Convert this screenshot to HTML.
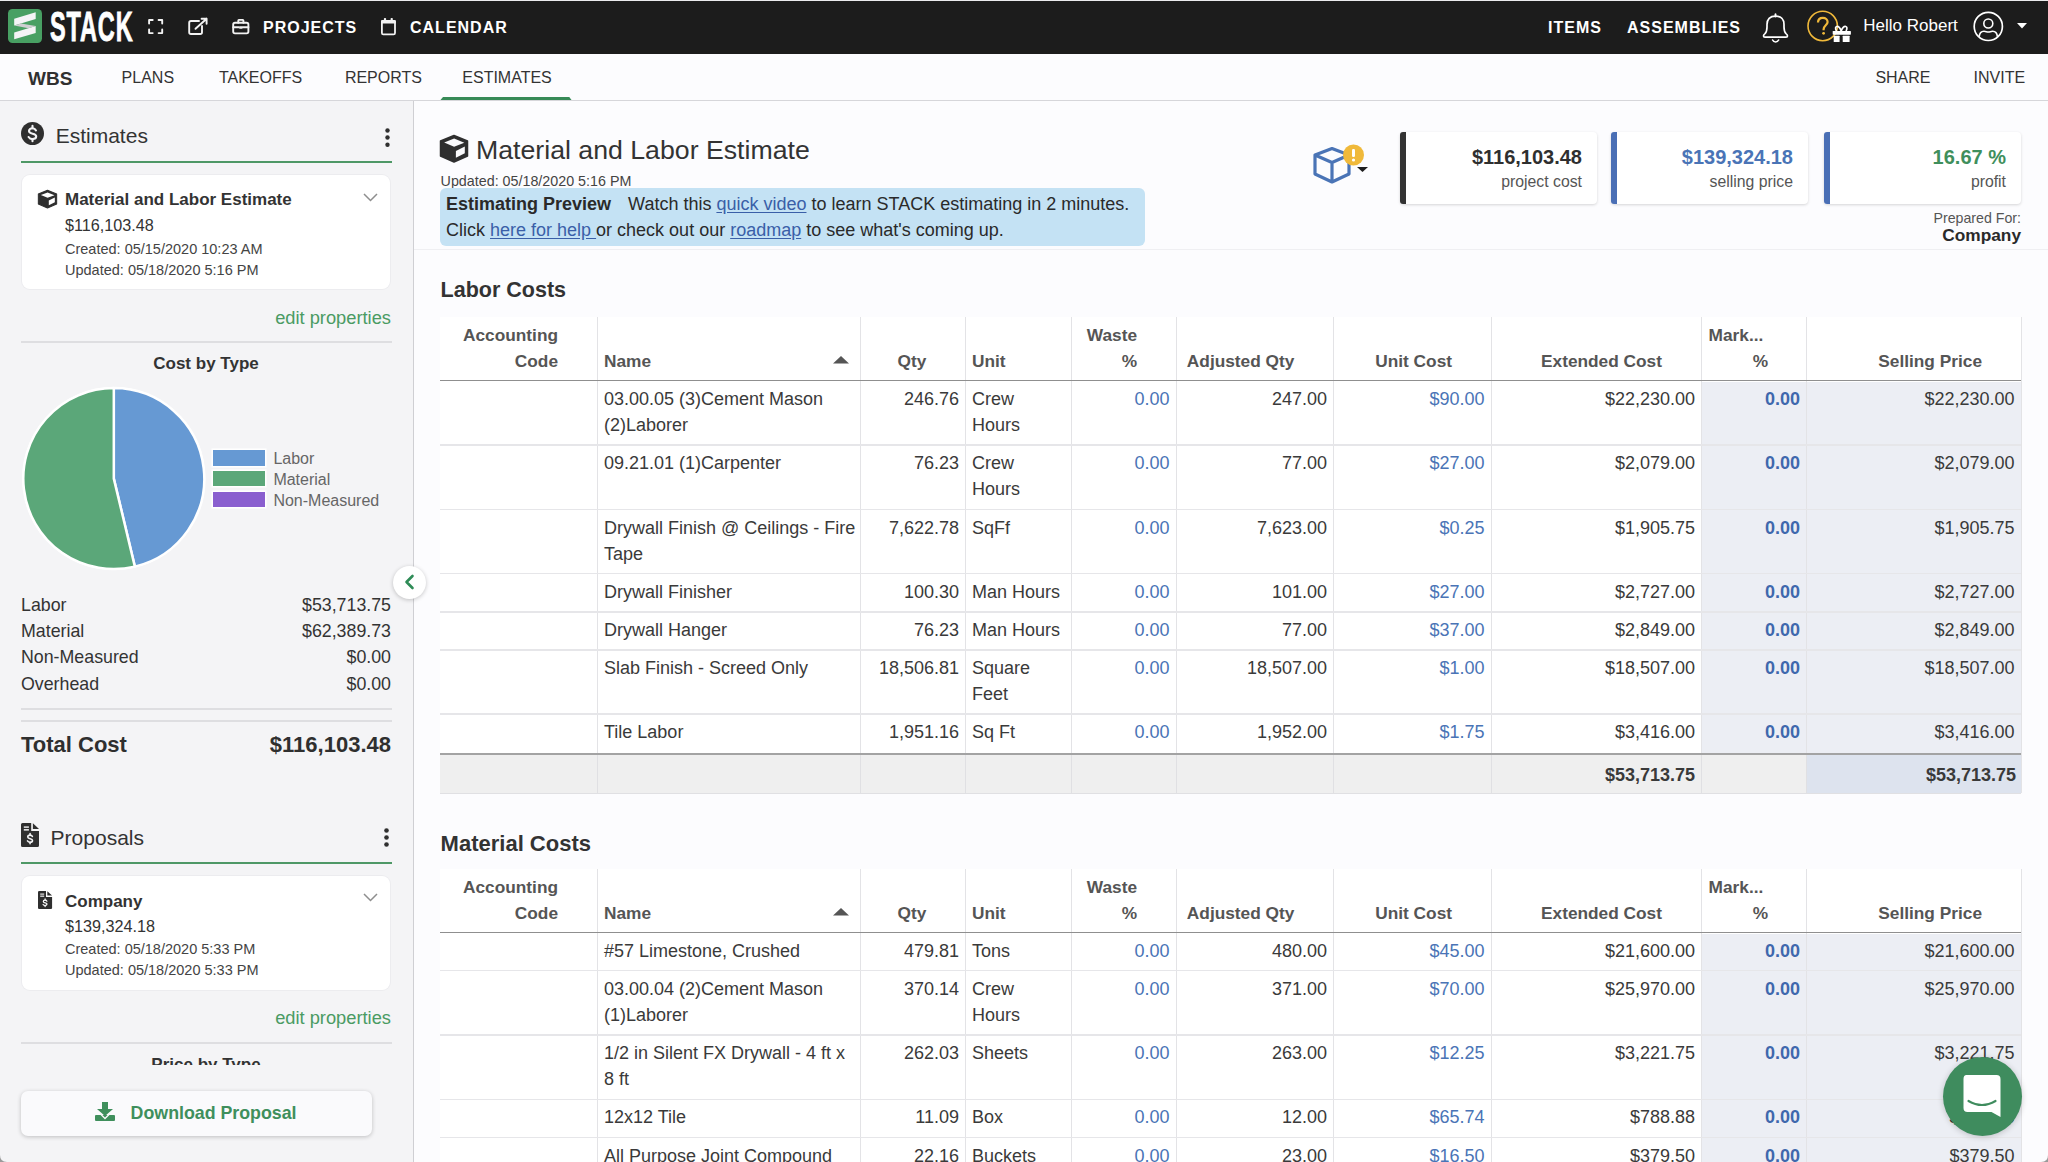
<!DOCTYPE html><html><head><meta charset="utf-8"><style>
html,body{margin:0;padding:0;width:2048px;height:1162px;overflow:hidden;background:#fcfcfe}
body{position:relative;font-family:"Liberation Sans",sans-serif}
.t{position:absolute;white-space:nowrap;line-height:1}
svg text{font-family:"Liberation Sans",sans-serif}
</style></head><body>
<div style="position:absolute;left:0px;top:0px;width:2048px;height:1162px;background:#fcfcfe"></div>
<div style="position:absolute;left:0px;top:0px;width:2048px;height:54px;background:#1c1c1c"></div>
<div style="position:absolute;left:0px;top:0px;width:2048px;height:1.4px;background:#ebebed"></div>
<div style="position:absolute;left:0px;top:54px;width:2048px;height:46px;background:#fcfcfe"></div>
<div style="position:absolute;left:0px;top:99.6px;width:2048px;height:1.5px;background:#d6d6da"></div>
<svg style="position:absolute;left:0px;top:0px;width:600px;height:110px;overflow:visible" viewBox="0 0 600 110"><path d="M440.5 99.9 L443 97.1 H569.3 L571.5 99.9 Z" fill="#378a57"/></svg>
<div style="position:absolute;left:0px;top:101px;width:413px;height:1061px;background:#f4f4f6"></div>
<div style="position:absolute;left:413px;top:101px;width:1.2px;height:1061px;background:#cfcfd3"></div>
<svg style="position:absolute;left:8.2px;top:8.8px;width:34px;height:34px;overflow:visible" viewBox="0 0 34 34"><rect x="0" y="0" width="34" height="34" rx="4.5" fill="#48a063"/>
<path d="M6.2 9.7 L27.7 3.3 L27.7 10.1 L6.2 16.6 Z" fill="#f4f4f6"/><path d="M6.2 23.5 L27.7 17.0 L27.7 23.9 L6.2 30.2 Z" fill="#f4f4f6"/>
<path d="M6.2 16.6 L13 14.6 L27.7 17.0 L20.5 19.2 Z" fill="#cfcfd2"/></svg>
<div class="t" style="top:5.65px;font-size:42px;font-weight:700;color:#ffffff;left:49.50px;transform:scaleX(0.56);transform-origin:0 0;letter-spacing:1.5px;-webkit-text-stroke:0.9px #fff;">STACK</div>
<svg style="position:absolute;left:0px;top:0px;width:300px;height:54px;overflow:visible" viewBox="0 0 300 54"><g fill="none" stroke="#f2f2f2" stroke-width="1.9" stroke-linecap="round" stroke-linejoin="round">
<path d="M149.1 23.6V20H152.7 M158.6 20H162.2V23.6 M162.2 29.5V33.1H158.6 M152.7 33.1H149.1V29.5"/>
<path d="M199 21H191Q189.2 21 189.2 22.8V32.2Q189.2 34 191 34H200.2Q202 34 202 32.2V26"/>
<path d="M195.5 28.8L206.6 18.7 M201.6 18.7H206.6V23.7"/>
<rect x="233.2" y="22.8" width="15.2" height="10.6" rx="1.8"/>
<path d="M238.3 22.8V20.5Q238.3 19.9 238.9 19.9H242.8Q243.4 19.9 243.4 20.5V22.8"/>
<path d="M233.2 27.2H238.8 M242.8 27.2H248.4"/>
</g><rect x="239.2" y="26.2" width="3.3" height="2.6" rx="0.6" fill="#f2f2f2"/></svg>
<div class="t" style="top:19.76px;font-size:16px;font-weight:700;color:#fff;letter-spacing:1.0px;left:263.00px;">PROJECTS</div>
<svg style="position:absolute;left:0px;top:0px;width:420px;height:54px;overflow:visible" viewBox="0 0 420 54"><rect x="381.9" y="20.9" width="13.1" height="13.4" rx="1.4" fill="none" stroke="#f2f2f2" stroke-width="1.8"/><rect x="381" y="20" width="14.9" height="3.6" rx="1.2" fill="#f2f2f2"/><rect x="383.9" y="17.9" width="2.2" height="3" rx="0.8" fill="#f2f2f2"/><rect x="390.6" y="17.9" width="2.2" height="3" rx="0.8" fill="#f2f2f2"/></svg>
<div class="t" style="top:19.76px;font-size:16px;font-weight:700;color:#fff;letter-spacing:1.0px;left:410.00px;">CALENDAR</div>
<div class="t" style="top:19.86px;font-size:16px;font-weight:700;color:#fff;letter-spacing:1.0px;left:1548.00px;">ITEMS</div>
<div class="t" style="top:19.86px;font-size:16px;font-weight:700;color:#fff;letter-spacing:1.0px;left:1627.00px;">ASSEMBLIES</div>
<svg style="position:absolute;left:1762px;top:14px;width:28px;height:30px;overflow:visible" viewBox="0 0 28 30"><path d="M1.5 22 Q1.5 20.6 3 19.6 Q5 17.6 5 13 L5 10.5 Q5 2.2 13.5 2.2 Q22 2.2 22 10.5 L22 13 Q22 17.6 24 19.6 Q25.5 20.6 25.5 22 Q25.5 23.2 24 23.2 L3 23.2 Q1.5 23.2 1.5 22 Z" fill="none" stroke="#fff" stroke-width="1.7" stroke-linejoin="round"/><path d="M13.5 0.2 V2.5" stroke="#fff" stroke-width="1.8" stroke-linecap="round"/><path d="M10.6 26 A3.3 3.3 0 0 0 16.6 26" fill="none" stroke="#fff" stroke-width="1.6" stroke-linecap="round"/></svg>
<svg style="position:absolute;left:1806px;top:10px;width:48px;height:34px;overflow:visible" viewBox="0 0 48 34"><circle cx="16.7" cy="16" r="14.7" fill="none" stroke="#f0b93a" stroke-width="1.6"/><path d="M12 12.5 C12 9.2 14.2 7.8 16.8 7.8 C19.6 7.8 21.6 9.6 21.6 12 C21.6 15 17.6 15.6 17.6 19.2 V20.2" fill="none" stroke="#f0b93a" stroke-width="2.2"/><circle cx="17.6" cy="23.3" r="1.4" fill="#f0b93a"/>
<path d="M35.2 21 C32.5 14 27.5 16 30.5 21 M35.2 21 C38 14 43 16 40 21" fill="none" stroke="#fff" stroke-width="1.7"/><rect x="26.7" y="20.9" width="18.2" height="3.8" rx="0.6" fill="#fff"/><rect x="27.7" y="25.8" width="5.9" height="6.1" rx="0.5" fill="#fff"/><rect x="36.7" y="25.8" width="6.9" height="6.1" rx="0.5" fill="#fff"/></svg>
<div class="t" style="top:17.41px;font-size:17px;font-weight:400;color:#fff;left:1863.30px;">Hello Robert</div>
<svg style="position:absolute;left:1972px;top:10px;width:33px;height:33px;overflow:visible" viewBox="0 0 33 33"><circle cx="16.3" cy="16.4" r="14.1" fill="none" stroke="#fff" stroke-width="1.7"/><circle cx="16.3" cy="13.5" r="4.5" fill="none" stroke="#fff" stroke-width="1.6"/><path d="M7.2 26.8 C7.5 23 9.5 21.3 12 21.3 C14 21.3 14.5 22 16.3 22 C18.1 22 18.6 21.3 20.6 21.3 C23.1 21.3 25.1 23 25.4 26.8" fill="none" stroke="#fff" stroke-width="1.6"/></svg>
<svg style="position:absolute;left:2016.8px;top:23.4px;width:10px;height:5.5px;overflow:visible" viewBox="0 0 10 5.5"><path d="M0 0H10L5 5.5Z" fill="#fff"/></svg>
<div class="t" style="top:68.92px;font-size:19px;font-weight:700;color:#303030;left:28.00px;">WBS</div>
<div class="t" style="top:69.96px;font-size:16px;font-weight:400;color:#333;left:121.60px;">PLANS</div>
<div class="t" style="top:69.96px;font-size:16px;font-weight:400;color:#333;left:218.90px;">TAKEOFFS</div>
<div class="t" style="top:69.96px;font-size:16px;font-weight:400;color:#333;left:344.90px;">REPORTS</div>
<div class="t" style="top:69.96px;font-size:16px;font-weight:400;color:#333;left:462.30px;">ESTIMATES</div>
<div class="t" style="top:69.96px;font-size:16px;font-weight:400;color:#333;left:1875.40px;">SHARE</div>
<div class="t" style="top:69.96px;font-size:16px;font-weight:400;color:#333;left:1973.60px;">INVITE</div>
<svg style="position:absolute;left:21px;top:121.5px;width:23px;height:23px;overflow:visible" viewBox="0 0 23 23"><circle cx="11.5" cy="11.5" r="11.5" fill="#2f2f2f"/><path d="M15 8.4 C14.2 6.9 13 6.3 11.5 6.3 C9.4 6.3 8 7.4 8 9 C8 12.6 15.2 10.8 15.2 14.3 C15.2 16 13.8 17.1 11.5 17.1 C9.8 17.1 8.5 16.5 7.6 15" fill="none" stroke="#f4f4f6" stroke-width="2.1" stroke-linecap="round"/><path d="M11.5 3.9 V6.3 M11.5 17.1 V19.3" stroke="#f4f4f6" stroke-width="2.1" stroke-linecap="round"/></svg>
<div class="t" style="top:124.52px;font-size:21px;font-weight:400;color:#333;left:55.70px;">Estimates</div>
<svg style="position:absolute;left:383.7px;top:127.5px;width:7px;height:19px;overflow:visible" viewBox="0 0 7 19"><circle cx="3.5" cy="2.5" r="2.2" fill="#2f2f2f"/><circle cx="3.5" cy="9.5" r="2.2" fill="#2f2f2f"/><circle cx="3.5" cy="16.7" r="2.2" fill="#2f2f2f"/></svg>
<div style="position:absolute;left:21px;top:161.3px;width:371px;height:1.7px;background:#4e9866"></div>
<div style="position:absolute;left:22px;top:175px;width:368px;height:114px;background:#fff;border-radius:8px;box-shadow:0 0 0 1px #ececef"></div>
<svg style="position:absolute;left:38px;top:190px;width:19px;height:18px;overflow:visible" viewBox="0 0 19 18"><g transform="scale(0.6786,0.6667)"><path d="M14 0.5 L27.5 6 L27.5 21 L14 27 L0.5 21 L0.5 6 Z" fill="#2f2f2f" stroke="#2f2f2f" stroke-width="1.5" stroke-linejoin="round"/><path d="M4.2 7.5 L14.1 3.6 L24.3 7.8 L14.1 11.7 Z" fill="#fff"/><path d="M15.9 15.9 L24.8 11.4 L24.8 18.3 L15.9 22.8 Z" fill="#fff"/></g></svg>
<div class="t" style="top:190.91px;font-size:17px;font-weight:700;color:#333;left:65.00px;">Material and Labor Estimate</div>
<svg style="position:absolute;left:363px;top:193px;width:15px;height:9px;overflow:visible" viewBox="0 0 15 9"><path d="M1 1 L7.5 7.5 L14 1" fill="none" stroke="#8e8e8e" stroke-width="1.5"/></svg>
<div class="t" style="top:217.39px;font-size:16.2px;font-weight:400;color:#333;left:65.00px;">$116,103.48</div>
<div class="t" style="top:241.53px;font-size:14.5px;font-weight:400;color:#444;left:65.00px;">Created: 05/15/2020 10:23 AM</div>
<div class="t" style="top:262.63px;font-size:14.5px;font-weight:400;color:#444;left:65.00px;">Updated: 05/18/2020 5:16 PM</div>
<div class="t" style="top:308.51px;font-size:18.3px;font-weight:400;color:#4a9b63;right:1657.00px;">edit properties</div>
<div style="position:absolute;left:21px;top:341px;width:371px;height:2px;background:#dedee1"></div>
<div class="t" style="top:355.21px;font-size:17px;font-weight:700;color:#333;left:-394.00px;width:1200px;text-align:center;">Cost by Type</div>
<svg style="position:absolute;left:0px;top:0px;width:300px;height:700px;overflow:visible" viewBox="0 0 300 700"><circle cx="113.8" cy="478.6" r="91.5" fill="#fff"/>
<path d="M113.8 478.6 L113.8 388.1 A90.5 90.5 0 0 1 134.87 566.61 Z" fill="#6699d3" stroke="#fff" stroke-width="2.5" stroke-linejoin="round"/>
<path d="M113.8 478.6 L134.87 566.61 A90.5 90.5 0 1 1 113.8 388.1 Z" fill="#5ba779" stroke="#fff" stroke-width="2.5" stroke-linejoin="round"/></svg>
<div style="position:absolute;left:213px;top:450px;width:52px;height:16px;background:#6699d3;box-shadow:0 0 0 1.5px #fff"></div>
<div style="position:absolute;left:213px;top:471px;width:52px;height:15px;background:#5ba779;box-shadow:0 0 0 1.5px #fff"></div>
<div style="position:absolute;left:213px;top:492px;width:52px;height:15px;background:#8a5fcf;box-shadow:0 0 0 1.5px #fff"></div>
<div class="t" style="top:450.66px;font-size:16px;font-weight:400;color:#666;left:273.40px;">Labor</div>
<div class="t" style="top:471.86px;font-size:16px;font-weight:400;color:#666;left:273.40px;">Material</div>
<div class="t" style="top:493.06px;font-size:16px;font-weight:400;color:#666;left:273.40px;">Non-Measured</div>
<div class="t" style="top:596.73px;font-size:17.8px;font-weight:400;color:#333;left:21.00px;">Labor</div>
<div class="t" style="top:596.73px;font-size:17.8px;font-weight:400;color:#333;right:1657.00px;">$53,713.75</div>
<div class="t" style="top:623.03px;font-size:17.8px;font-weight:400;color:#333;left:21.00px;">Material</div>
<div class="t" style="top:623.03px;font-size:17.8px;font-weight:400;color:#333;right:1657.00px;">$62,389.73</div>
<div class="t" style="top:649.33px;font-size:17.8px;font-weight:400;color:#333;left:21.00px;">Non-Measured</div>
<div class="t" style="top:649.33px;font-size:17.8px;font-weight:400;color:#333;right:1657.00px;">$0.00</div>
<div class="t" style="top:675.63px;font-size:17.8px;font-weight:400;color:#333;left:21.00px;">Overhead</div>
<div class="t" style="top:675.63px;font-size:17.8px;font-weight:400;color:#333;right:1657.00px;">$0.00</div>
<div style="position:absolute;left:21px;top:708px;width:371px;height:2px;background:#dedee1"></div>
<div style="position:absolute;left:21px;top:720px;width:371px;height:2px;background:#dedee1"></div>
<div class="t" style="top:733.98px;font-size:22px;font-weight:700;color:#2f2f2f;left:21.00px;">Total Cost</div>
<div class="t" style="top:733.98px;font-size:22px;font-weight:700;color:#2f2f2f;right:1657.00px;">$116,103.48</div>
<div style="position:absolute;left:393px;top:565.5px;width:33px;height:33px;background:#fff;border-radius:50%;box-shadow:0 1px 4px rgba(0,0,0,0.22)"></div>
<svg style="position:absolute;left:402.5px;top:573.5px;width:12px;height:16px;overflow:visible" viewBox="0 0 12 16"><path d="M9.5 2 L3.5 8 L9.5 14" fill="none" stroke="#2f8c57" stroke-width="2.6" stroke-linecap="round" stroke-linejoin="round"/></svg>
<svg style="position:absolute;left:21px;top:823px;width:18px;height:24px;overflow:visible" viewBox="0 0 18 24"><path d="M1.5 0 H10.2 V8 H18 V22.5 Q18 24 16.5 24 H1.5 Q0 24 0 22.5 V1.5 Q0 0 1.5 0 Z" fill="#2f2f2f"/><path d="M11.9 0.2 L18 5.9 H11.9 Z" fill="#2f2f2f"/><rect x="2.8" y="3.4" width="5.1" height="1.4" fill="#f4f4f6"/><rect x="2.8" y="6.1" width="5.1" height="1.5" fill="#f4f4f6"/><g transform="translate(9,15.6) scale(0.66) translate(-11.4,-11.6)"><path d="M15 8.4 C14.2 6.9 13 6.3 11.5 6.3 C9.4 6.3 8 7.4 8 9 C8 12.6 15.2 10.8 15.2 14.3 C15.2 16 13.8 17.1 11.5 17.1 C9.8 17.1 8.5 16.5 7.6 15" fill="none" stroke="#f4f4f6" stroke-width="2.4" stroke-linecap="round"/><path d="M11.5 3.9 V6.3 M11.5 17.1 V19.3" stroke="#f4f4f6" stroke-width="2.4" stroke-linecap="round"/></g></svg>
<div class="t" style="top:827.22px;font-size:21px;font-weight:400;color:#333;left:50.60px;">Proposals</div>
<svg style="position:absolute;left:383px;top:828px;width:7px;height:19px;overflow:visible" viewBox="0 0 7 19"><circle cx="3.5" cy="2.5" r="2.3" fill="#2f2f2f"/><circle cx="3.5" cy="9.5" r="2.3" fill="#2f2f2f"/><circle cx="3.5" cy="16.5" r="2.3" fill="#2f2f2f"/></svg>
<div style="position:absolute;left:21px;top:862.2px;width:371px;height:1.7px;background:#4e9866"></div>
<div style="position:absolute;left:22px;top:876px;width:368px;height:114px;background:#fff;border-radius:8px;box-shadow:0 0 0 1px #ececef"></div>
<svg style="position:absolute;left:37.8px;top:890.9px;width:14.1px;height:18.1px;overflow:visible" viewBox="0 0 14.1 18.1"><g transform="scale(0.7833,0.7542)"><path d="M1.5 0 H10.2 V8 H18 V22.5 Q18 24 16.5 24 H1.5 Q0 24 0 22.5 V1.5 Q0 0 1.5 0 Z" fill="#2f2f2f"/><path d="M11.9 0.2 L18 5.9 H11.9 Z" fill="#2f2f2f"/><rect x="2.8" y="3.4" width="5.1" height="1.4" fill="#fff"/><rect x="2.8" y="6.1" width="5.1" height="1.5" fill="#fff"/><g transform="translate(9,15.6) scale(0.66) translate(-11.4,-11.6)"><path d="M15 8.4 C14.2 6.9 13 6.3 11.5 6.3 C9.4 6.3 8 7.4 8 9 C8 12.6 15.2 10.8 15.2 14.3 C15.2 16 13.8 17.1 11.5 17.1 C9.8 17.1 8.5 16.5 7.6 15" fill="none" stroke="#fff" stroke-width="2.4" stroke-linecap="round"/><path d="M11.5 3.9 V6.3 M11.5 17.1 V19.3" stroke="#fff" stroke-width="2.4" stroke-linecap="round"/></g></g></svg>
<div class="t" style="top:892.51px;font-size:17px;font-weight:700;color:#333;left:65.00px;">Company</div>
<svg style="position:absolute;left:363px;top:893px;width:15px;height:9px;overflow:visible" viewBox="0 0 15 9"><path d="M1 1 L7.5 7.5 L14 1" fill="none" stroke="#8e8e8e" stroke-width="1.5"/></svg>
<div class="t" style="top:918.09px;font-size:16.2px;font-weight:400;color:#333;left:65.00px;">$139,324.18</div>
<div class="t" style="top:941.73px;font-size:14.5px;font-weight:400;color:#444;left:65.00px;">Created: 05/18/2020 5:33 PM</div>
<div class="t" style="top:962.73px;font-size:14.5px;font-weight:400;color:#444;left:65.00px;">Updated: 05/18/2020 5:33 PM</div>
<div class="t" style="top:1008.91px;font-size:18.3px;font-weight:400;color:#4a9b63;right:1657.00px;">edit properties</div>
<div style="position:absolute;left:21px;top:1042px;width:371px;height:2px;background:#dedee1"></div>
<div style="position:absolute;left:0;top:1050px;width:413px;height:15px;overflow:hidden">
<div class="t" style="top:6.21px;font-size:17px;font-weight:700;color:#333;left:-394.00px;width:1200px;text-align:center;">Price by Type</div>
</div>
<div style="position:absolute;left:21px;top:1091px;width:351px;height:45px;background:#fafafc;border-radius:7px;box-shadow:0 1px 4px rgba(0,0,0,0.22)"></div>
<svg style="position:absolute;left:95px;top:1102px;width:20px;height:19px;overflow:visible" viewBox="0 0 20 19"><path d="M7 0H13V7H18L10 14L2 7H7Z" fill="#3f8f5c"/><rect x="0" y="13" width="20" height="6" rx="1" fill="#3f8f5c"/><path d="M6 12.5L10 16.5L14 12.5" fill="none" stroke="#fafafc" stroke-width="1.3"/></svg>
<div class="t" style="top:1104.73px;font-size:17.8px;font-weight:700;color:#3f8f5c;left:130.60px;">Download Proposal</div>
<svg style="position:absolute;left:440px;top:135px;width:28px;height:28px;overflow:visible" viewBox="0 0 28 28"><path d="M14 0.5 L27.5 6 L27.5 21 L14 27 L0.5 21 L0.5 6 Z" fill="#2f2f2f" stroke="#2f2f2f" stroke-width="1.5" stroke-linejoin="round"/><path d="M4.2 7.5 L14.1 3.6 L24.3 7.8 L14.1 11.7 Z" fill="#fafafc"/><path d="M15.9 15.9 L24.8 11.4 L24.8 18.3 L15.9 22.8 Z" fill="#fafafc"/></svg>
<div class="t" style="top:136.90px;font-size:26.7px;font-weight:400;color:#333;left:476.00px;">Material and Labor Estimate</div>
<div class="t" style="top:173.80px;font-size:14.3px;font-weight:400;color:#444;left:440.60px;">Updated: 05/18/2020 5:16 PM</div>
<div style="position:absolute;left:440px;top:188px;width:705px;height:58px;background:#c4e2f4;border-radius:6px"></div>
<div class="t" style="top:195.26px;font-size:18px;font-weight:400;color:#2a2a2a;left:446.00px;"><b style="font-weight:700">Estimating Preview</b><span style="display:inline-block;width:17px"></span>Watch this <span style="color:#3a5fa8;text-decoration:underline;text-underline-offset:2px">quick video</span> to learn STACK estimating in 2 minutes.</div>
<div class="t" style="top:220.96px;font-size:18px;font-weight:400;color:#2a2a2a;left:446.00px;">Click <span style="color:#3a5fa8;text-decoration:underline;text-underline-offset:2px">here for help </span>or check out our <span style="color:#3a5fa8;text-decoration:underline;text-underline-offset:2px">roadmap</span> to see what's coming up.</div>
<div style="position:absolute;left:414px;top:248.5px;width:1634px;height:1.5px;background:#efeff2"></div>
<svg style="position:absolute;left:1312px;top:145px;width:58px;height:40px;overflow:visible" viewBox="0 0 58 40"><path d="M20 3.5 L37 10 L37 29 L20 37 L3 29 L3 10 Z M3 10 L20 17.5 L37 10 M20 17.5 V37" fill="none" stroke="#4a74b6" stroke-width="3.2" stroke-linejoin="round"/>
<circle cx="41.5" cy="10" r="10.5" fill="#f0b93a"/><rect x="40" y="4" width="3" height="8" rx="1.2" fill="#fff"/><circle cx="41.5" cy="15" r="1.6" fill="#fff"/>
<path d="M45 22H56L50.5 27Z" fill="#1e1e1e"/></svg>
<div style="position:absolute;left:1400px;top:131.5px;width:197px;height:72.5px;background:#fff;border-radius:4px;box-shadow:0 1px 3px rgba(0,0,0,0.16)"></div>
<div style="position:absolute;left:1400px;top:131.5px;width:6px;height:72.5px;background:#333333;border-radius:3px 0 0 3px"></div>
<div class="t" style="top:146.77px;font-size:20px;font-weight:700;color:#2f2f2f;right:466.00px;">$116,103.48</div>
<div class="t" style="top:173.63px;font-size:15.8px;font-weight:400;color:#555;right:466.00px;">project cost</div>
<div style="position:absolute;left:1611px;top:131.5px;width:197px;height:72.5px;background:#fff;border-radius:4px;box-shadow:0 1px 3px rgba(0,0,0,0.16)"></div>
<div style="position:absolute;left:1611px;top:131.5px;width:6px;height:72.5px;background:#4a6fb5;border-radius:3px 0 0 3px"></div>
<div class="t" style="top:146.77px;font-size:20px;font-weight:700;color:#4a74b6;right:255.00px;">$139,324.18</div>
<div class="t" style="top:173.63px;font-size:15.8px;font-weight:400;color:#555;right:255.00px;">selling price</div>
<div style="position:absolute;left:1824px;top:131.5px;width:197px;height:72.5px;background:#fff;border-radius:4px;box-shadow:0 1px 3px rgba(0,0,0,0.16)"></div>
<div style="position:absolute;left:1824px;top:131.5px;width:6px;height:72.5px;background:#4a6fb5;border-radius:3px 0 0 3px"></div>
<div class="t" style="top:146.77px;font-size:20px;font-weight:700;color:#3f8f5c;right:42.00px;">16.67 %</div>
<div class="t" style="top:173.63px;font-size:15.8px;font-weight:400;color:#555;right:42.00px;">profit</div>
<div class="t" style="top:210.88px;font-size:14.2px;font-weight:400;color:#555;right:27.00px;">Prepared For:</div>
<div class="t" style="top:226.76px;font-size:17.3px;font-weight:700;color:#2a2a2a;right:27.00px;">Company</div>
<div class="t" style="top:280.40px;font-size:21.5px;font-weight:700;color:#333;left:440.60px;">Labor Costs</div>
<div class="t" style="top:832.88px;font-size:22px;font-weight:700;color:#333;left:440.60px;">Material Costs</div>
<div style="position:absolute;left:440px;top:317px;width:1581px;height:476.29999999999995px;background:#fff"></div>
<div style="position:absolute;left:1701px;top:382.0px;width:320px;height:411.29999999999995px;background:#eceef4"></div>
<div class="t" style="top:326.86px;font-size:17.3px;font-weight:700;color:#555;right:1490.00px;">Accounting</div>
<div class="t" style="top:352.66px;font-size:17.3px;font-weight:700;color:#555;right:1490.00px;">Code</div>
<div class="t" style="top:352.66px;font-size:17.3px;font-weight:700;color:#555;left:604.00px;">Name</div>
<svg style="position:absolute;left:833px;top:355.5px;width:16px;height:8px;overflow:visible" viewBox="0 0 16 8"><path d="M0 7.5H16L8 0Z" fill="#555"/></svg>
<div class="t" style="top:352.66px;font-size:17.3px;font-weight:700;color:#555;right:1121.60px;">Qty</div>
<div class="t" style="top:352.66px;font-size:17.3px;font-weight:700;color:#555;left:972.00px;">Unit</div>
<div class="t" style="top:326.86px;font-size:17.3px;font-weight:700;color:#555;right:911.00px;">Waste</div>
<div class="t" style="top:352.66px;font-size:17.3px;font-weight:700;color:#555;right:911.00px;">%</div>
<div class="t" style="top:352.66px;font-size:17.3px;font-weight:700;color:#555;right:753.60px;">Adjusted Qty</div>
<div class="t" style="top:352.66px;font-size:17.3px;font-weight:700;color:#555;right:596.00px;">Unit Cost</div>
<div class="t" style="top:352.66px;font-size:17.3px;font-weight:700;color:#555;right:386.00px;">Extended Cost</div>
<div class="t" style="top:326.86px;font-size:17.3px;font-weight:700;color:#555;left:1708.60px;">Mark...</div>
<div class="t" style="top:352.66px;font-size:17.3px;font-weight:700;color:#555;right:280.00px;">%</div>
<div class="t" style="top:352.66px;font-size:17.3px;font-weight:700;color:#555;right:66.00px;">Selling Price</div>
<div style="position:absolute;left:597px;top:317px;width:1px;height:476.29999999999995px;background:#e3e3e6"></div>
<div style="position:absolute;left:860px;top:317px;width:1px;height:476.29999999999995px;background:#e3e3e6"></div>
<div style="position:absolute;left:965px;top:317px;width:1px;height:476.29999999999995px;background:#e3e3e6"></div>
<div style="position:absolute;left:1071px;top:317px;width:1px;height:476.29999999999995px;background:#e3e3e6"></div>
<div style="position:absolute;left:1176px;top:317px;width:1px;height:476.29999999999995px;background:#e3e3e6"></div>
<div style="position:absolute;left:1333px;top:317px;width:1px;height:476.29999999999995px;background:#e3e3e6"></div>
<div style="position:absolute;left:1491px;top:317px;width:1px;height:476.29999999999995px;background:#e3e3e6"></div>
<div style="position:absolute;left:1701px;top:317px;width:1px;height:476.29999999999995px;background:#e3e3e6"></div>
<div style="position:absolute;left:1806px;top:317px;width:1px;height:476.29999999999995px;background:#e3e3e6"></div>
<div style="position:absolute;left:2021px;top:317px;width:1px;height:476.29999999999995px;background:#e3e3e6"></div>
<div style="position:absolute;left:440px;top:379.6px;width:1581px;height:1.8px;background:#8f8f8f"></div>
<div class="t" style="top:389.66px;font-size:18px;font-weight:400;color:#3a3a3a;left:604.00px;">03.00.05 (3)Cement Mason</div>
<div class="t" style="top:415.66px;font-size:18px;font-weight:400;color:#3a3a3a;left:604.00px;">(2)Laborer</div>
<div class="t" style="top:389.66px;font-size:18px;font-weight:400;color:#3a3a3a;right:1089.00px;">246.76</div>
<div class="t" style="top:389.66px;font-size:18px;font-weight:400;color:#3a3a3a;left:972.00px;">Crew</div>
<div class="t" style="top:415.66px;font-size:18px;font-weight:400;color:#3a3a3a;left:972.00px;">Hours</div>
<div class="t" style="top:389.66px;font-size:18px;font-weight:400;color:#4a74b6;right:878.50px;">0.00</div>
<div class="t" style="top:389.66px;font-size:18px;font-weight:400;color:#3a3a3a;right:721.00px;">247.00</div>
<div class="t" style="top:389.66px;font-size:18px;font-weight:400;color:#4a74b6;right:563.50px;">$90.00</div>
<div class="t" style="top:389.66px;font-size:18px;font-weight:400;color:#3a3a3a;right:353.00px;">$22,230.00</div>
<div class="t" style="top:389.66px;font-size:18px;font-weight:700;color:#3f68ad;right:248.00px;">0.00</div>
<div class="t" style="top:389.66px;font-size:18px;font-weight:400;color:#3a3a3a;right:33.50px;">$22,230.00</div>
<div style="position:absolute;left:440px;top:444.45px;width:1581px;height:1.5px;background:#e6e6e9"></div>
<div class="t" style="top:454.36px;font-size:18px;font-weight:400;color:#3a3a3a;left:604.00px;">09.21.01 (1)Carpenter</div>
<div class="t" style="top:454.36px;font-size:18px;font-weight:400;color:#3a3a3a;right:1089.00px;">76.23</div>
<div class="t" style="top:454.36px;font-size:18px;font-weight:400;color:#3a3a3a;left:972.00px;">Crew</div>
<div class="t" style="top:480.36px;font-size:18px;font-weight:400;color:#3a3a3a;left:972.00px;">Hours</div>
<div class="t" style="top:454.36px;font-size:18px;font-weight:400;color:#4a74b6;right:878.50px;">0.00</div>
<div class="t" style="top:454.36px;font-size:18px;font-weight:400;color:#3a3a3a;right:721.00px;">77.00</div>
<div class="t" style="top:454.36px;font-size:18px;font-weight:400;color:#4a74b6;right:563.50px;">$27.00</div>
<div class="t" style="top:454.36px;font-size:18px;font-weight:400;color:#3a3a3a;right:353.00px;">$2,079.00</div>
<div class="t" style="top:454.36px;font-size:18px;font-weight:700;color:#3f68ad;right:248.00px;">0.00</div>
<div class="t" style="top:454.36px;font-size:18px;font-weight:400;color:#3a3a3a;right:33.50px;">$2,079.00</div>
<div style="position:absolute;left:440px;top:508.75px;width:1581px;height:1.5px;background:#e6e6e9"></div>
<div class="t" style="top:518.66px;font-size:18px;font-weight:400;color:#3a3a3a;left:604.00px;">Drywall Finish @ Ceilings - Fire</div>
<div class="t" style="top:544.66px;font-size:18px;font-weight:400;color:#3a3a3a;left:604.00px;">Tape</div>
<div class="t" style="top:518.66px;font-size:18px;font-weight:400;color:#3a3a3a;right:1089.00px;">7,622.78</div>
<div class="t" style="top:518.66px;font-size:18px;font-weight:400;color:#3a3a3a;left:972.00px;">SqFf</div>
<div class="t" style="top:518.66px;font-size:18px;font-weight:400;color:#4a74b6;right:878.50px;">0.00</div>
<div class="t" style="top:518.66px;font-size:18px;font-weight:400;color:#3a3a3a;right:721.00px;">7,623.00</div>
<div class="t" style="top:518.66px;font-size:18px;font-weight:400;color:#4a74b6;right:563.50px;">$0.25</div>
<div class="t" style="top:518.66px;font-size:18px;font-weight:400;color:#3a3a3a;right:353.00px;">$1,905.75</div>
<div class="t" style="top:518.66px;font-size:18px;font-weight:700;color:#3f68ad;right:248.00px;">0.00</div>
<div class="t" style="top:518.66px;font-size:18px;font-weight:400;color:#3a3a3a;right:33.50px;">$1,905.75</div>
<div style="position:absolute;left:440px;top:572.85px;width:1581px;height:1.5px;background:#e6e6e9"></div>
<div class="t" style="top:582.76px;font-size:18px;font-weight:400;color:#3a3a3a;left:604.00px;">Drywall Finisher</div>
<div class="t" style="top:582.76px;font-size:18px;font-weight:400;color:#3a3a3a;right:1089.00px;">100.30</div>
<div class="t" style="top:582.76px;font-size:18px;font-weight:400;color:#3a3a3a;left:972.00px;">Man Hours</div>
<div class="t" style="top:582.76px;font-size:18px;font-weight:400;color:#4a74b6;right:878.50px;">0.00</div>
<div class="t" style="top:582.76px;font-size:18px;font-weight:400;color:#3a3a3a;right:721.00px;">101.00</div>
<div class="t" style="top:582.76px;font-size:18px;font-weight:400;color:#4a74b6;right:563.50px;">$27.00</div>
<div class="t" style="top:582.76px;font-size:18px;font-weight:400;color:#3a3a3a;right:353.00px;">$2,727.00</div>
<div class="t" style="top:582.76px;font-size:18px;font-weight:700;color:#3f68ad;right:248.00px;">0.00</div>
<div class="t" style="top:582.76px;font-size:18px;font-weight:400;color:#3a3a3a;right:33.50px;">$2,727.00</div>
<div style="position:absolute;left:440px;top:611.15px;width:1581px;height:1.5px;background:#e6e6e9"></div>
<div class="t" style="top:621.06px;font-size:18px;font-weight:400;color:#3a3a3a;left:604.00px;">Drywall Hanger</div>
<div class="t" style="top:621.06px;font-size:18px;font-weight:400;color:#3a3a3a;right:1089.00px;">76.23</div>
<div class="t" style="top:621.06px;font-size:18px;font-weight:400;color:#3a3a3a;left:972.00px;">Man Hours</div>
<div class="t" style="top:621.06px;font-size:18px;font-weight:400;color:#4a74b6;right:878.50px;">0.00</div>
<div class="t" style="top:621.06px;font-size:18px;font-weight:400;color:#3a3a3a;right:721.00px;">77.00</div>
<div class="t" style="top:621.06px;font-size:18px;font-weight:400;color:#4a74b6;right:563.50px;">$37.00</div>
<div class="t" style="top:621.06px;font-size:18px;font-weight:400;color:#3a3a3a;right:353.00px;">$2,849.00</div>
<div class="t" style="top:621.06px;font-size:18px;font-weight:700;color:#3f68ad;right:248.00px;">0.00</div>
<div class="t" style="top:621.06px;font-size:18px;font-weight:400;color:#3a3a3a;right:33.50px;">$2,849.00</div>
<div style="position:absolute;left:440px;top:649.15px;width:1581px;height:1.5px;background:#e6e6e9"></div>
<div class="t" style="top:659.06px;font-size:18px;font-weight:400;color:#3a3a3a;left:604.00px;">Slab Finish - Screed Only</div>
<div class="t" style="top:659.06px;font-size:18px;font-weight:400;color:#3a3a3a;right:1089.00px;">18,506.81</div>
<div class="t" style="top:659.06px;font-size:18px;font-weight:400;color:#3a3a3a;left:972.00px;">Square</div>
<div class="t" style="top:685.06px;font-size:18px;font-weight:400;color:#3a3a3a;left:972.00px;">Feet</div>
<div class="t" style="top:659.06px;font-size:18px;font-weight:400;color:#4a74b6;right:878.50px;">0.00</div>
<div class="t" style="top:659.06px;font-size:18px;font-weight:400;color:#3a3a3a;right:721.00px;">18,507.00</div>
<div class="t" style="top:659.06px;font-size:18px;font-weight:400;color:#4a74b6;right:563.50px;">$1.00</div>
<div class="t" style="top:659.06px;font-size:18px;font-weight:400;color:#3a3a3a;right:353.00px;">$18,507.00</div>
<div class="t" style="top:659.06px;font-size:18px;font-weight:700;color:#3f68ad;right:248.00px;">0.00</div>
<div class="t" style="top:659.06px;font-size:18px;font-weight:400;color:#3a3a3a;right:33.50px;">$18,507.00</div>
<div style="position:absolute;left:440px;top:713.35px;width:1581px;height:1.5px;background:#e6e6e9"></div>
<div class="t" style="top:723.26px;font-size:18px;font-weight:400;color:#3a3a3a;left:604.00px;">Tile Labor</div>
<div class="t" style="top:723.26px;font-size:18px;font-weight:400;color:#3a3a3a;right:1089.00px;">1,951.16</div>
<div class="t" style="top:723.26px;font-size:18px;font-weight:400;color:#3a3a3a;left:972.00px;">Sq Ft</div>
<div class="t" style="top:723.26px;font-size:18px;font-weight:400;color:#4a74b6;right:878.50px;">0.00</div>
<div class="t" style="top:723.26px;font-size:18px;font-weight:400;color:#3a3a3a;right:721.00px;">1,952.00</div>
<div class="t" style="top:723.26px;font-size:18px;font-weight:400;color:#4a74b6;right:563.50px;">$1.75</div>
<div class="t" style="top:723.26px;font-size:18px;font-weight:400;color:#3a3a3a;right:353.00px;">$3,416.00</div>
<div class="t" style="top:723.26px;font-size:18px;font-weight:700;color:#3f68ad;right:248.00px;">0.00</div>
<div class="t" style="top:723.26px;font-size:18px;font-weight:400;color:#3a3a3a;right:33.50px;">$3,416.00</div>
<div style="position:absolute;left:440px;top:752.55px;width:1581px;height:1.5px;background:#e6e6e9"></div>
<div style="position:absolute;left:440px;top:754.3px;width:1366px;height:39px;background:#efefef"></div>
<div style="position:absolute;left:1806px;top:754.3px;width:215px;height:39px;background:#dde3ee"></div>
<div style="position:absolute;left:597px;top:754.3px;width:1px;height:39px;background:#e0e0e3"></div>
<div style="position:absolute;left:860px;top:754.3px;width:1px;height:39px;background:#e0e0e3"></div>
<div style="position:absolute;left:965px;top:754.3px;width:1px;height:39px;background:#e0e0e3"></div>
<div style="position:absolute;left:1071px;top:754.3px;width:1px;height:39px;background:#e0e0e3"></div>
<div style="position:absolute;left:1176px;top:754.3px;width:1px;height:39px;background:#e0e0e3"></div>
<div style="position:absolute;left:1333px;top:754.3px;width:1px;height:39px;background:#e0e0e3"></div>
<div style="position:absolute;left:1491px;top:754.3px;width:1px;height:39px;background:#e0e0e3"></div>
<div style="position:absolute;left:1701px;top:754.3px;width:1px;height:39px;background:#e0e0e3"></div>
<div style="position:absolute;left:1806px;top:754.3px;width:1px;height:39px;background:#e0e0e3"></div>
<div style="position:absolute;left:440px;top:752.5px;width:1581px;height:2.4px;background:#a3a3a3"></div>
<div style="position:absolute;left:440px;top:792.5999999999999px;width:1581px;height:1.2px;background:#e0e0e3"></div>
<div class="t" style="top:765.56px;font-size:18px;font-weight:700;color:#3a3a3a;right:353.00px;">$53,713.75</div>
<div class="t" style="top:765.56px;font-size:18px;font-weight:700;color:#3a3a3a;right:32.00px;">$53,713.75</div>
<div style="position:absolute;left:440px;top:869px;width:1581px;height:293px;background:#fff"></div>
<div style="position:absolute;left:1701px;top:934.0px;width:320px;height:228.0px;background:#eceef4"></div>
<div class="t" style="top:878.86px;font-size:17.3px;font-weight:700;color:#555;right:1490.00px;">Accounting</div>
<div class="t" style="top:904.66px;font-size:17.3px;font-weight:700;color:#555;right:1490.00px;">Code</div>
<div class="t" style="top:904.66px;font-size:17.3px;font-weight:700;color:#555;left:604.00px;">Name</div>
<svg style="position:absolute;left:833px;top:907.5px;width:16px;height:8px;overflow:visible" viewBox="0 0 16 8"><path d="M0 7.5H16L8 0Z" fill="#555"/></svg>
<div class="t" style="top:904.66px;font-size:17.3px;font-weight:700;color:#555;right:1121.60px;">Qty</div>
<div class="t" style="top:904.66px;font-size:17.3px;font-weight:700;color:#555;left:972.00px;">Unit</div>
<div class="t" style="top:878.86px;font-size:17.3px;font-weight:700;color:#555;right:911.00px;">Waste</div>
<div class="t" style="top:904.66px;font-size:17.3px;font-weight:700;color:#555;right:911.00px;">%</div>
<div class="t" style="top:904.66px;font-size:17.3px;font-weight:700;color:#555;right:753.60px;">Adjusted Qty</div>
<div class="t" style="top:904.66px;font-size:17.3px;font-weight:700;color:#555;right:596.00px;">Unit Cost</div>
<div class="t" style="top:904.66px;font-size:17.3px;font-weight:700;color:#555;right:386.00px;">Extended Cost</div>
<div class="t" style="top:878.86px;font-size:17.3px;font-weight:700;color:#555;left:1708.60px;">Mark...</div>
<div class="t" style="top:904.66px;font-size:17.3px;font-weight:700;color:#555;right:280.00px;">%</div>
<div class="t" style="top:904.66px;font-size:17.3px;font-weight:700;color:#555;right:66.00px;">Selling Price</div>
<div style="position:absolute;left:597px;top:869px;width:1px;height:293px;background:#e3e3e6"></div>
<div style="position:absolute;left:860px;top:869px;width:1px;height:293px;background:#e3e3e6"></div>
<div style="position:absolute;left:965px;top:869px;width:1px;height:293px;background:#e3e3e6"></div>
<div style="position:absolute;left:1071px;top:869px;width:1px;height:293px;background:#e3e3e6"></div>
<div style="position:absolute;left:1176px;top:869px;width:1px;height:293px;background:#e3e3e6"></div>
<div style="position:absolute;left:1333px;top:869px;width:1px;height:293px;background:#e3e3e6"></div>
<div style="position:absolute;left:1491px;top:869px;width:1px;height:293px;background:#e3e3e6"></div>
<div style="position:absolute;left:1701px;top:869px;width:1px;height:293px;background:#e3e3e6"></div>
<div style="position:absolute;left:1806px;top:869px;width:1px;height:293px;background:#e3e3e6"></div>
<div style="position:absolute;left:2021px;top:869px;width:1px;height:293px;background:#e3e3e6"></div>
<div style="position:absolute;left:440px;top:931.6px;width:1581px;height:1.8px;background:#8f8f8f"></div>
<div class="t" style="top:941.66px;font-size:18px;font-weight:400;color:#3a3a3a;left:604.00px;">#57 Limestone, Crushed</div>
<div class="t" style="top:941.66px;font-size:18px;font-weight:400;color:#3a3a3a;right:1089.00px;">479.81</div>
<div class="t" style="top:941.66px;font-size:18px;font-weight:400;color:#3a3a3a;left:972.00px;">Tons</div>
<div class="t" style="top:941.66px;font-size:18px;font-weight:400;color:#4a74b6;right:878.50px;">0.00</div>
<div class="t" style="top:941.66px;font-size:18px;font-weight:400;color:#3a3a3a;right:721.00px;">480.00</div>
<div class="t" style="top:941.66px;font-size:18px;font-weight:400;color:#4a74b6;right:563.50px;">$45.00</div>
<div class="t" style="top:941.66px;font-size:18px;font-weight:400;color:#3a3a3a;right:353.00px;">$21,600.00</div>
<div class="t" style="top:941.66px;font-size:18px;font-weight:700;color:#3f68ad;right:248.00px;">0.00</div>
<div class="t" style="top:941.66px;font-size:18px;font-weight:400;color:#3a3a3a;right:33.50px;">$21,600.00</div>
<div style="position:absolute;left:440px;top:969.85px;width:1581px;height:1.5px;background:#e6e6e9"></div>
<div class="t" style="top:979.76px;font-size:18px;font-weight:400;color:#3a3a3a;left:604.00px;">03.00.04 (2)Cement Mason</div>
<div class="t" style="top:1005.76px;font-size:18px;font-weight:400;color:#3a3a3a;left:604.00px;">(1)Laborer</div>
<div class="t" style="top:979.76px;font-size:18px;font-weight:400;color:#3a3a3a;right:1089.00px;">370.14</div>
<div class="t" style="top:979.76px;font-size:18px;font-weight:400;color:#3a3a3a;left:972.00px;">Crew</div>
<div class="t" style="top:1005.76px;font-size:18px;font-weight:400;color:#3a3a3a;left:972.00px;">Hours</div>
<div class="t" style="top:979.76px;font-size:18px;font-weight:400;color:#4a74b6;right:878.50px;">0.00</div>
<div class="t" style="top:979.76px;font-size:18px;font-weight:400;color:#3a3a3a;right:721.00px;">371.00</div>
<div class="t" style="top:979.76px;font-size:18px;font-weight:400;color:#4a74b6;right:563.50px;">$70.00</div>
<div class="t" style="top:979.76px;font-size:18px;font-weight:400;color:#3a3a3a;right:353.00px;">$25,970.00</div>
<div class="t" style="top:979.76px;font-size:18px;font-weight:700;color:#3f68ad;right:248.00px;">0.00</div>
<div class="t" style="top:979.76px;font-size:18px;font-weight:400;color:#3a3a3a;right:33.50px;">$25,970.00</div>
<div style="position:absolute;left:440px;top:1034.05px;width:1581px;height:1.5px;background:#e6e6e9"></div>
<div class="t" style="top:1043.96px;font-size:18px;font-weight:400;color:#3a3a3a;left:604.00px;">1/2 in Silent FX Drywall - 4 ft x</div>
<div class="t" style="top:1069.96px;font-size:18px;font-weight:400;color:#3a3a3a;left:604.00px;">8 ft</div>
<div class="t" style="top:1043.96px;font-size:18px;font-weight:400;color:#3a3a3a;right:1089.00px;">262.03</div>
<div class="t" style="top:1043.96px;font-size:18px;font-weight:400;color:#3a3a3a;left:972.00px;">Sheets</div>
<div class="t" style="top:1043.96px;font-size:18px;font-weight:400;color:#4a74b6;right:878.50px;">0.00</div>
<div class="t" style="top:1043.96px;font-size:18px;font-weight:400;color:#3a3a3a;right:721.00px;">263.00</div>
<div class="t" style="top:1043.96px;font-size:18px;font-weight:400;color:#4a74b6;right:563.50px;">$12.25</div>
<div class="t" style="top:1043.96px;font-size:18px;font-weight:400;color:#3a3a3a;right:353.00px;">$3,221.75</div>
<div class="t" style="top:1043.96px;font-size:18px;font-weight:700;color:#3f68ad;right:248.00px;">0.00</div>
<div class="t" style="top:1043.96px;font-size:18px;font-weight:400;color:#3a3a3a;right:33.50px;">$3,221.75</div>
<div style="position:absolute;left:440px;top:1098.55px;width:1581px;height:1.5px;background:#e6e6e9"></div>
<div class="t" style="top:1108.46px;font-size:18px;font-weight:400;color:#3a3a3a;left:604.00px;">12x12 Tile</div>
<div class="t" style="top:1108.46px;font-size:18px;font-weight:400;color:#3a3a3a;right:1089.00px;">11.09</div>
<div class="t" style="top:1108.46px;font-size:18px;font-weight:400;color:#3a3a3a;left:972.00px;">Box</div>
<div class="t" style="top:1108.46px;font-size:18px;font-weight:400;color:#4a74b6;right:878.50px;">0.00</div>
<div class="t" style="top:1108.46px;font-size:18px;font-weight:400;color:#3a3a3a;right:721.00px;">12.00</div>
<div class="t" style="top:1108.46px;font-size:18px;font-weight:400;color:#4a74b6;right:563.50px;">$65.74</div>
<div class="t" style="top:1108.46px;font-size:18px;font-weight:400;color:#3a3a3a;right:353.00px;">$788.88</div>
<div class="t" style="top:1108.46px;font-size:18px;font-weight:700;color:#3f68ad;right:248.00px;">0.00</div>
<div class="t" style="top:1108.46px;font-size:18px;font-weight:400;color:#3a3a3a;right:33.50px;">$788.88</div>
<div style="position:absolute;left:440px;top:1136.75px;width:1581px;height:1.5px;background:#e6e6e9"></div>
<div class="t" style="top:1146.66px;font-size:18px;font-weight:400;color:#3a3a3a;left:604.00px;">All Purpose Joint Compound</div>
<div class="t" style="top:1146.66px;font-size:18px;font-weight:400;color:#3a3a3a;right:1089.00px;">22.16</div>
<div class="t" style="top:1146.66px;font-size:18px;font-weight:400;color:#3a3a3a;left:972.00px;">Buckets</div>
<div class="t" style="top:1146.66px;font-size:18px;font-weight:400;color:#4a74b6;right:878.50px;">0.00</div>
<div class="t" style="top:1146.66px;font-size:18px;font-weight:400;color:#3a3a3a;right:721.00px;">23.00</div>
<div class="t" style="top:1146.66px;font-size:18px;font-weight:400;color:#4a74b6;right:563.50px;">$16.50</div>
<div class="t" style="top:1146.66px;font-size:18px;font-weight:400;color:#3a3a3a;right:353.00px;">$379.50</div>
<div class="t" style="top:1146.66px;font-size:18px;font-weight:700;color:#3f68ad;right:248.00px;">0.00</div>
<div class="t" style="top:1146.66px;font-size:18px;font-weight:400;color:#3a3a3a;right:33.50px;">$379.50</div>
<div style="position:absolute;left:1943px;top:1057px;width:79px;height:79px;background:#3f8c5e;border-radius:50%;box-shadow:0 1px 6px rgba(0,0,0,0.2)"></div>
<svg style="position:absolute;left:1963px;top:1075px;width:38px;height:42px;overflow:visible" viewBox="0 0 37 42"><path d="M3 0H33Q37 0 37 4V42L28 37H4Q0 37 0 33V4Q0 0 3 0Z" fill="#fff"/><path d="M5 26 Q18.5 34 32 26" fill="none" stroke="#3f8c5e" stroke-width="2.2" stroke-linecap="round"/></svg>
<svg style="position:absolute;left:0px;top:1155px;width:7px;height:7px;overflow:visible" viewBox="0 0 7 7"><path d="M0 0 Q0 7 7 7 H0Z" fill="#9a9a9a"/></svg>
<svg style="position:absolute;left:2041px;top:1155px;width:7px;height:7px;overflow:visible" viewBox="0 0 7 7"><path d="M7 0 Q7 7 0 7 H7Z" fill="#9a9a9a"/></svg>
</body></html>
